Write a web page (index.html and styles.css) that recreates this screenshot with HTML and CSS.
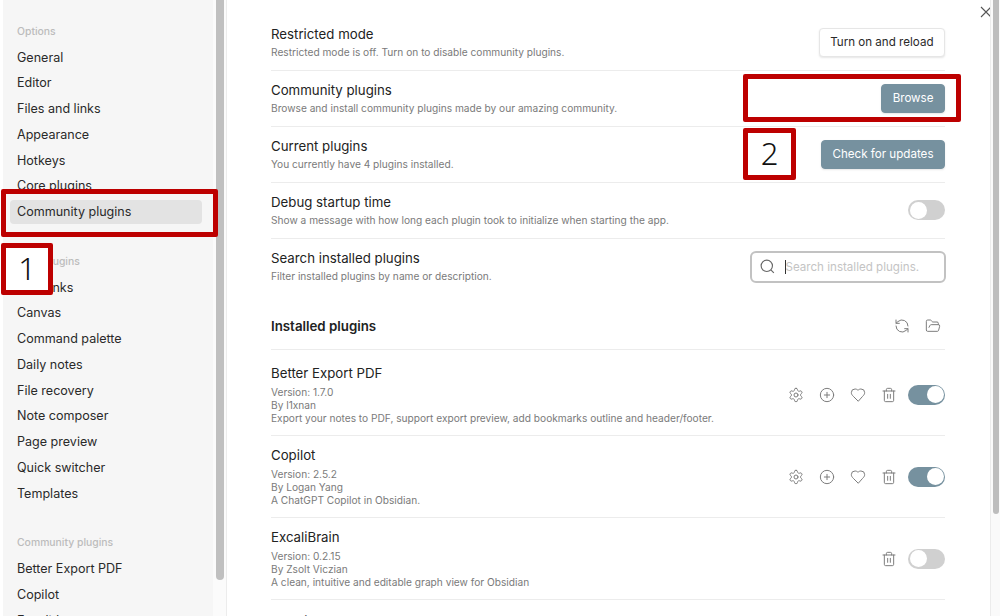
FILE: index.html
```html
<!DOCTYPE html>
<html lang="en">
<head>
<meta charset="utf-8">
<title>Settings</title>
<link rel="stylesheet" href="styles.css">
</head>
<body>
<div class="window">
  <svg width="0" height="0" class="defs">
    <defs>
      <symbol id="i-gear" viewBox="0 0 24 24"><path d="M12.22 2h-.44a2 2 0 0 0-2 2v.18a2 2 0 0 1-1 1.73l-.43.25a2 2 0 0 1-2 0l-.15-.08a2 2 0 0 0-2.73.73l-.22.38a2 2 0 0 0 .73 2.73l.15.1a2 2 0 0 1 1 1.72v.51a2 2 0 0 1-1 1.74l-.15.09a2 2 0 0 0-.73 2.73l.22.38a2 2 0 0 0 2.73.73l.15-.08a2 2 0 0 1 2 0l.43.25a2 2 0 0 1 1 1.73V20a2 2 0 0 0 2 2h.44a2 2 0 0 0 2-2v-.18a2 2 0 0 1 1-1.73l.43-.25a2 2 0 0 1 2 0l.15.08a2 2 0 0 0 2.73-.73l.22-.39a2 2 0 0 0-.73-2.73l-.15-.08a2 2 0 0 1-1-1.74v-.5a2 2 0 0 1 1-1.74l.15-.09a2 2 0 0 0 .73-2.73l-.22-.38a2 2 0 0 0-2.73-.73l-.15.08a2 2 0 0 1-2 0l-.43-.25a2 2 0 0 1-1-1.73V4a2 2 0 0 0-2-2z"/><circle cx="12" cy="12" r="3"/></symbol>
      <symbol id="i-plus" viewBox="0 0 24 24"><circle cx="12" cy="12" r="10"/><path d="M8 12h8M12 8v8"/></symbol>
      <symbol id="i-heart" viewBox="0 0 24 24"><path d="M19 14c1.49-1.46 3-3.21 3-5.5A5.5 5.5 0 0 0 16.5 3c-1.76 0-3 .5-4.5 2-1.5-1.5-2.74-2-4.5-2A5.5 5.5 0 0 0 2 8.5c0 2.3 1.5 4.05 3 5.5l7 7z"/></symbol>
      <symbol id="i-trash" viewBox="0 0 24 24"><path d="M3 6h18M19 6v14a2 2 0 0 1-2 2H7a2 2 0 0 1-2-2V6M8 6V4a2 2 0 0 1 2-2h4a2 2 0 0 1 2 2v2M10 11v6M14 11v6"/></symbol>
      <symbol id="i-refresh" viewBox="0 0 24 24"><path d="M21 12a9 9 0 0 0-15-6.7L3 8M3 3v5h5M3 12a9 9 0 0 0 15 6.7l3-2.7M21 21v-5h-5"/></symbol>
      <symbol id="i-folder" viewBox="0 0 24 24"><path d="m6 14 1.5-2.9A2 2 0 0 1 9.24 10H20a2 2 0 0 1 1.94 2.5l-1.54 6a2 2 0 0 1-1.95 1.5H4a2 2 0 0 1-2-2V5a2 2 0 0 1 2-2h3.9a2 2 0 0 1 1.69.9l.81 1.2a2 2 0 0 0 1.67.9H18a2 2 0 0 1 2 2v2"/></symbol>
      <symbol id="i-search" viewBox="0 0 24 24"><circle cx="11" cy="11" r="8"/><path d="m21 21-4.3-4.3"/></symbol>
      <symbol id="i-close" viewBox="0 0 24 24"><path d="M18 6 6 18M6 6l12 12"/></symbol>
    </defs>
  </svg>

  <aside class="sidebar">
    <nav class="nav">
      <h2 class="nav-heading nav-heading-first">Options</h2>
      <a class="nav-item">General</a>
      <a class="nav-item">Editor</a>
      <a class="nav-item">Files and links</a>
      <a class="nav-item">Appearance</a>
      <a class="nav-item">Hotkeys</a>
      <a class="nav-item">Core plugins</a>
      <a class="nav-item nav-item-active">Community plugins</a>
      <h2 class="nav-heading nav-heading-core">Core plugins</h2>
      <a class="nav-item">Backlinks</a>
      <a class="nav-item">Canvas</a>
      <a class="nav-item">Command palette</a>
      <a class="nav-item">Daily notes</a>
      <a class="nav-item">File recovery</a>
      <a class="nav-item">Note composer</a>
      <a class="nav-item">Page preview</a>
      <a class="nav-item">Quick switcher</a>
      <a class="nav-item">Templates</a>
      <h2 class="nav-heading nav-heading-community">Community plugins</h2>
      <a class="nav-item">Better Export PDF</a>
      <a class="nav-item">Copilot</a>
      <a class="nav-item">Excalidraw</a>
    </nav>
    <div class="scroll-track"><div class="scroll-thumb"></div></div>
  </aside>

  <main class="content">
    <section class="row">
      <div class="info">
        <div class="title">Restricted mode</div>
        <div class="desc">Restricted mode is off. Turn on to disable community plugins.</div>
      </div>
      <button class="btn">Turn on and reload</button>
    </section>
    <section class="row">
      <div class="info">
        <div class="title">Community plugins</div>
        <div class="desc">Browse and install community plugins made by our amazing community.</div>
      </div>
      <button class="btn btn-accent">Browse</button>
    </section>
    <section class="row">
      <div class="info">
        <div class="title">Current plugins</div>
        <div class="desc">You currently have 4 plugins installed.</div>
      </div>
      <button class="btn btn-accent">Check for updates</button>
    </section>
    <section class="row">
      <div class="info">
        <div class="title">Debug startup time</div>
        <div class="desc">Show a message with how long each plugin took to initialize when starting the app.</div>
      </div>
      <span class="toggle"></span>
    </section>
    <section class="row row-last">
      <div class="info">
        <div class="title">Search installed plugins</div>
        <div class="desc">Filter installed plugins by name or description.</div>
      </div>
      <label class="search">
        <svg class="icon-search"><use href="#i-search"/></svg>
        <span class="caret"></span>
        <span class="placeholder">Search installed plugins.</span>
      </label>
    </section>

    <header class="section-head">
      <h3 class="section-title">Installed plugins</h3>
      <div class="actions actions-head">
        <svg class="icon"><use href="#i-refresh"/></svg>
        <svg class="icon"><use href="#i-folder"/></svg>
      </div>
    </header>

    <section class="plugin plugin-first">
      <div class="info">
        <div class="title">Better Export PDF</div>
        <div class="meta">Version: 1.7.0</div>
        <div class="meta">By l1xnan</div>
        <div class="meta">Export your notes to PDF, support export preview, add bookmarks outline and header/footer.</div>
      </div>
      <div class="actions">
        <svg class="icon"><use href="#i-gear"/></svg>
        <svg class="icon"><use href="#i-plus"/></svg>
        <svg class="icon"><use href="#i-heart"/></svg>
        <svg class="icon"><use href="#i-trash"/></svg>
        <span class="toggle toggle-on"></span>
      </div>
    </section>
    <section class="plugin">
      <div class="info">
        <div class="title">Copilot</div>
        <div class="meta">Version: 2.5.2</div>
        <div class="meta">By Logan Yang</div>
        <div class="meta">A ChatGPT Copilot in Obsidian.</div>
      </div>
      <div class="actions">
        <svg class="icon"><use href="#i-gear"/></svg>
        <svg class="icon"><use href="#i-plus"/></svg>
        <svg class="icon"><use href="#i-heart"/></svg>
        <svg class="icon"><use href="#i-trash"/></svg>
        <span class="toggle toggle-on"></span>
      </div>
    </section>
    <section class="plugin">
      <div class="info">
        <div class="title">ExcaliBrain</div>
        <div class="meta">Version: 0.2.15</div>
        <div class="meta">By Zsolt Viczian</div>
        <div class="meta">A clean, intuitive and editable graph view for Obsidian</div>
      </div>
      <div class="actions">
        <svg class="icon"><use href="#i-trash"/></svg>
        <span class="toggle"></span>
      </div>
    </section>
    <section class="plugin plugin-next">
      <div class="title">Excalidraw</div>
    </section>
  </main>

  <svg class="close"><use href="#i-close"/></svg>
  <div class="scroll-track scroll-track-main"><div class="scroll-thumb scroll-thumb-main"></div></div>

  <div class="callout callout-nav"></div>
  <div class="callout callout-num callout-one">1</div>
  <div class="callout callout-browse"></div>
  <div class="callout callout-num callout-two">2</div>
</div>
</body>
</html>
```
FILE: styles.css
```css
* { box-sizing: border-box; }
html, body { margin: 0; height: 100%; }
body {
  background: #fff;
  color: #222;
  font-family: Inter, "Liberation Sans", sans-serif;
  overflow: hidden;
}
.defs { position: absolute; }
.window {
  position: relative;
  display: flex;
  width: 1000px;
  height: 616px;
  overflow: hidden;
  padding-left: 3px;
}
.sidebar {
  position: relative;
  flex: 0 0 224px;
  height: 616px;
  background: #f6f6f6;
  border-right: 1px solid #ececec;
  overflow: hidden;
}
.nav { padding: 0 24px 0 7px; }
.nav-heading {
  margin: 0;
  padding-left: 7px;
  height: 14px;
  font-size: 10.4px;
  line-height: 14px;
  font-weight: 500;
  color: #bcbcbc;
  white-space: nowrap;
}
.nav-heading-first { margin-top: 24.5px; margin-bottom: 6px; }
.nav-heading-core { margin-top: 30.5px; margin-bottom: 6px; }
.nav-heading-community { margin-top: 30px; margin-bottom: 6px; }
.nav-item {
  display: block;
  height: 25.75px;
  padding-left: 7px;
  font-size: 12.55px;
  line-height: 25px;
  color: #2a2a2a;
  border-radius: 4px;
  white-space: nowrap;
}
.nav-item-active { background: #e3e3e3; height: 24px; margin-top: 1px; line-height: 23px; }
.scroll-track {
  position: absolute;
  top: 0;
  right: 0;
  width: 13px;
  height: 100%;
  background: #fbfbfb;
}
.sidebar .scroll-thumb { margin-left: 3px; }
.scroll-thumb {
  width: 8px;
  height: 580px;
  background: #c0c0c0;
  border-radius: 0 0 4px 4px;
}
.scroll-track-main {
  right: 0;
  width: 10px;
  background: #fafafa;
  border-left: 1px solid #ececec;
}
.scroll-thumb-main { width: 6px; height: 514px; margin-left: 2px; background: #bdbdbd; }
.content {
  flex: 1;
  height: 616px;
  padding: 15px 55px 0 44px;
  overflow: hidden;
  min-width: 0;
}
.row {
  display: flex;
  align-items: center;
  justify-content: space-between;
  height: 56px;
  padding-bottom: 1px;
  border-bottom: 1px solid #ececec;
}
.row-last { border-bottom: 0; }
.row .info { margin-bottom: 1px; }
.info { min-width: 0; }
.title {
  font-size: 13.25px;
  line-height: 18px;
  color: #222;
  white-space: nowrap;
}
.desc, .meta {
  font-size: 10.17px;
  line-height: 13px;
  color: #7a7a7a;
  white-space: nowrap;
}
.desc { margin-top: 3px; }
.btn {
  height: 29px;
  padding: 0 10.5px;
  font: 400 11.6px Inter, "Liberation Sans", sans-serif;
  color: #2a2a2a;
  background: #fff;
  border: 1px solid #e6e6e6;
  border-radius: 4px;
  box-shadow: 0 1px 2px rgba(0,0,0,.1);
}
.btn-accent {
  background: #76919f;
  border-color: #76919f;
  color: #fff;
}
.toggle {
  position: relative;
  display: inline-block;
  flex: none;
  width: 37px;
  height: 20px;
  border-radius: 10px;
  background: #d0d0d0;
}
.toggle::after {
  content: "";
  position: absolute;
  top: 1.5px;
  left: 1.5px;
  width: 17px;
  height: 17px;
  border-radius: 50%;
  background: #fff;
}
.toggle-on { background: #76919f; }
.toggle-on::after { left: auto; right: 1.5px; }
.search {
  display: flex;
  align-items: center;
  width: 196px;
  height: 32px;
  margin-right: -1px;
  padding-left: 7px;
  border: 2.5px solid #c2c2c2;
  border-radius: 6px;
}
.icon-search {
  width: 17px;
  height: 17px;
  fill: none;
  stroke: #666;
  stroke-width: 1.6;
}
.caret { width: 1px; height: 14px; margin-left: 8.5px; background: #333; }
.placeholder {
  font-size: 11.6px;
  color: #c4c4c4;
  white-space: nowrap;
  overflow: hidden;
}
.section-head {
  display: flex;
  align-items: center;
  justify-content: space-between;
  height: 55px;
  border-bottom: 1px solid #ececec;
  padding-top: 8px;
}
.section-title {
  margin: 0;
  font-size: 13.3px;
  font-weight: 600;
  color: #222;
}
.actions {
  display: flex;
  align-items: center;
  gap: 15px;
}
.actions-head { padding-right: 4px; }
.icon {
  width: 16px;
  height: 16px;
  fill: none;
  stroke: #7d7d7d;
  stroke-width: 1.5;
  stroke-linecap: round;
  stroke-linejoin: round;
}
.actions .toggle { margin-left: -4px; }
.plugin {
  display: flex;
  align-items: center;
  justify-content: space-between;
  height: 82px;
  border-bottom: 1px solid #ececec;
}
.plugin-first { height: 86px; padding-top: 4px; }
.plugin-next { align-items: flex-start; padding-top: 12px; border-bottom: 0; }
.plugin .title { margin-bottom: 4px; }
.callout {
  position: absolute;
  border: 5px solid #bd0000;
  border-radius: 2px;
}
.callout-num {
  display: flex;
  align-items: center;
  justify-content: center;
  background: #fff;
  color: #111;
  font-family: "Noto Sans", sans-serif;
  font-weight: 300;
  font-size: 31px;
  line-height: 1;
  padding-bottom: 2px;
}
.callout-nav { left: 1px; top: 189px; width: 217px; height: 48px; }
.callout-one { left: 1px; top: 243px; width: 52px; height: 52px; }
.callout-browse { left: 743px; top: 74px; width: 218px; height: 48px; }
.callout-two { left: 743px; top: 128px; width: 53px; height: 52px; }
.close {
  position: absolute;
  top: 2px;
  left: 976px;
  width: 20px;
  height: 20px;
  fill: none;
  stroke: #555;
  stroke-width: 1.3;
}
```
